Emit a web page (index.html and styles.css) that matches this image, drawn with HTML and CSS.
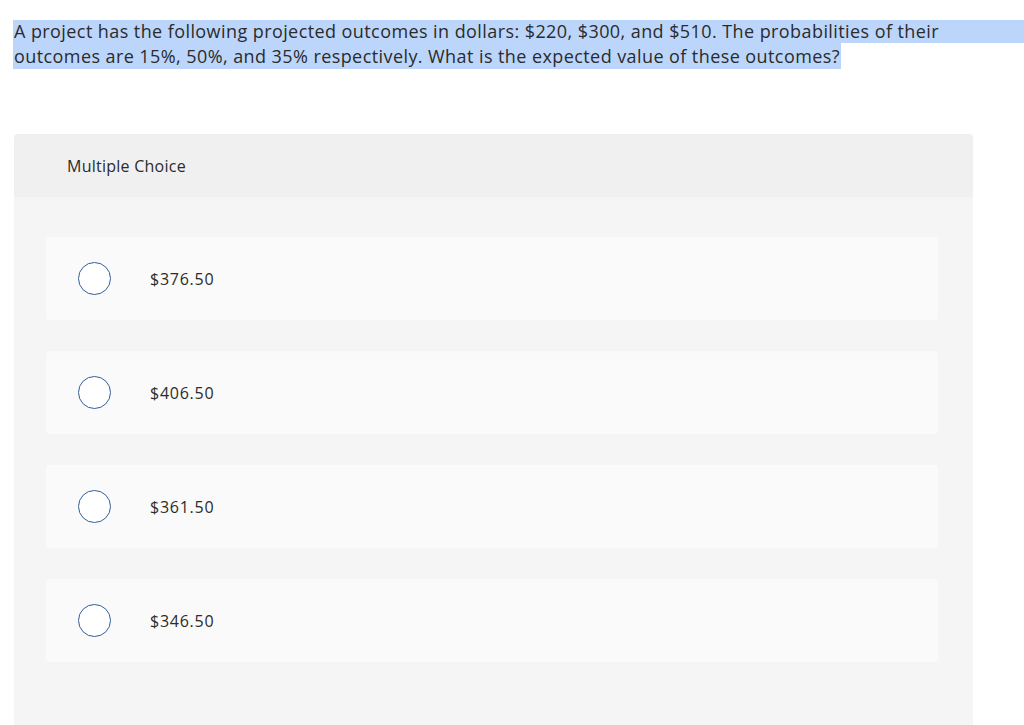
FILE: index.html
```html
<!DOCTYPE html>
<html lang="en">
<head>
<meta charset="utf-8">
<title>Multiple Choice</title>
<link rel="stylesheet" href="styles.css">
</head>
<body>
<div class="question">
  <div class="line line-full">A project has the following projected outcomes in dollars: $220, $300, and $510. The probabilities of their</div>
  <div class="line"><span class="sel">outcomes are 15%, 50%, and 35% respectively. What is the expected value of these outcomes?</span></div>
</div>

<section class="panel">
  <header class="panel-head">Multiple Choice</header>
  <div class="panel-body">
    <div class="option"><span class="radio"></span><span class="label">$376.50</span></div>
    <div class="option"><span class="radio"></span><span class="label">$406.50</span></div>
    <div class="option"><span class="radio"></span><span class="label">$361.50</span></div>
    <div class="option"><span class="radio"></span><span class="label">$346.50</span></div>
  </div>
</section>
</body>
</html>
```

FILE: styles.css
```css
html, body {
  margin: 0;
  padding: 0;
  background: #ffffff;
  overflow: hidden;
}

body {
  font-family: "Open Sans", "Lato", sans-serif;
  color: #2b2b2b;
  width: 1024px;
  height: 725px;
}

.question {
  margin-top: 20px;
  padding-left: 13px;
  font-size: 18px;
  letter-spacing: 0.42px;
}

.line {
  white-space: nowrap;
  height: 23px;
  line-height: 23px;
}

.line-full {
  background: #bcd6fb;
  padding-left: 1px;
}

.sel {
  display: inline-block;
  background: #bcd6fb;
  height: 26px;
  line-height: 26px;
  padding-left: 1px;
  padding-right: 1px;
}

.panel {
  margin: 68px 0 0 14px;
  width: 959px;
  height: 600px;
  background: #f5f5f5;
  border-radius: 4px 4px 0 0;
}

.panel-head {
  height: 63px;
  display: flex;
  align-items: center;
  padding-left: 53px;
  background: #f0f0f0;
  border-radius: 4px 4px 0 0;
  font-size: 16px;
  letter-spacing: 0.25px;
  color: #2b2b2b;
}

.panel-body {
  padding: 40px 35px 0 32px;
  display: flex;
  flex-direction: column;
  gap: 31px;
}

.option {
  height: 83px;
  display: flex;
  align-items: center;
  padding-left: 32px;
  background: #fafafa;
  border-radius: 4px;
}

.radio {
  width: 31px;
  height: 31px;
  border: 1.5px solid #2f5f9c;
  border-radius: 50%;
  background: #ffffff;
  flex: none;
}

.label {
  margin-left: 39px;
  font-size: 16px;
  letter-spacing: 0.75px;
  color: #2b2b2b;
}
```
